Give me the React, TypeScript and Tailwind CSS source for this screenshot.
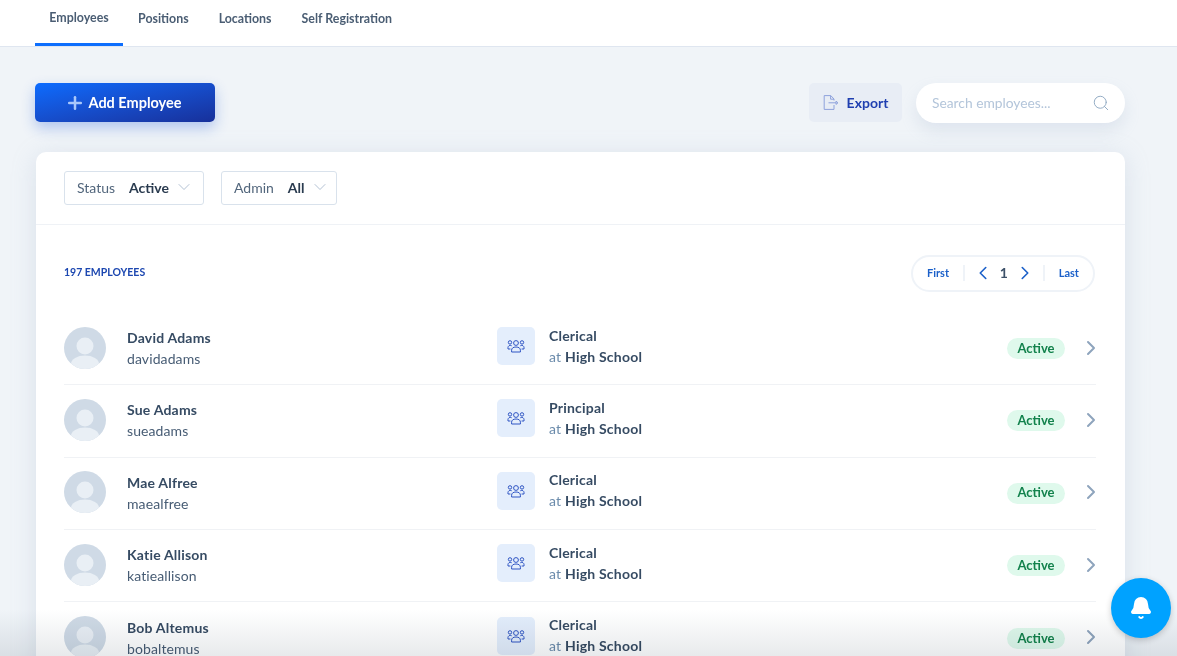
import * as React from "react"
import { ChevronDown, ChevronLeft, ChevronRight, Search, Plus, Bell } from "lucide-react"

const employees = [
  { name: "David Adams", user: "davidadams", role: "Clerical" },
  { name: "Sue Adams", user: "sueadams", role: "Principal" },
  { name: "Mae Alfree", user: "maealfree", role: "Clerical" },
  { name: "Katie Allison", user: "katieallison", role: "Clerical" },
  { name: "Bob Altemus", user: "bobaltemus", role: "Clerical" },
]

const tabs = ["Positions", "Locations", "Self Registration"]

const Avatar = () => (
  <svg width="42" height="42" viewBox="0 0 42 42" className="mb-[2px] shrink-0">
    <defs>
      <clipPath id="avatar-clip">
        <circle cx="21" cy="21" r="21" />
      </clipPath>
    </defs>
    <g clipPath="url(#avatar-clip)">
      <rect width="42" height="42" fill="#cfdae6" />
      <circle cx="21" cy="19" r="8.5" fill="#e9eff5" />
      <ellipse cx="21" cy="37" rx="14" ry="8.5" fill="#e9eff5" />
    </g>
  </svg>
)

const GroupIcon = () => (
  <svg width="18" height="14" viewBox="0 0 18 14" fill="none" stroke="#2f55c4" strokeWidth="1">
    <circle cx="9" cy="4" r="2.4" />
    <circle cx="3" cy="3.4" r="1.7" />
    <circle cx="15" cy="3.4" r="1.7" />
    <path d="M4.6 13v-1.8c0-2 1.6-3.2 4.4-3.2s4.4 1.2 4.4 3.2V13z" />
    <path d="M3.4 10H1c-.3-2 .4-3.6 2.2-3.6.6 0 1.1.1 1.5.4" />
    <path d="M14.6 10H17c.3-2-.4-3.6-2.2-3.6-.6 0-1.1.1-1.5.4" />
  </svg>
)

const ExportIcon = () => (
  <svg width="16" height="15" viewBox="0 0 16 15" fill="none" stroke="#8ea2dc" strokeWidth="1">
    <path d="M11 5.5V4L7.8.6H1.2v13.8H11V10" />
    <path d="M7.6.8v3.4H11" />
    <path d="M5.5 7.8h7.5" />
    <path d="M13 6.2l2 1.6-2 1.6z" />
  </svg>
)

const FilterSelect = ({ label, value, className }: { label: string; value: string; className: string }) => (
  <div className={`flex h-[34px] items-center rounded-[3px] border border-[#d9e2ec] pl-[12px] text-[14px] ${className}`}>
    <span className="text-[#52667c]">{label}</span>
    <span className="ml-[14px] font-bold text-[#2a3b4f]">{value}</span>
    <ChevronDown size={20} strokeWidth={1} className="mb-[2px] ml-[5px] text-[#a3b5ca]" />
  </div>
)

const EmployeeRow = ({ name, user, role, last }: { name: string; user: string; role: string; last: boolean }) => (
  <div className={`flex h-[72.3px] items-center ${last ? "" : "border-b border-[#f0f2f5]"}`}>
    <div className="flex w-[433px] items-center gap-[21px]">
      <Avatar />
      <div>
        <div className="text-[14px] leading-[20px] font-bold tracking-[0.2px] text-[#364b63]">{name}</div>
        <div className="mt-[1px] text-[14px] leading-[20px] tracking-[0.1px] text-[#475c74]">{user}</div>
      </div>
    </div>
    <div className="flex flex-1 items-center gap-[14px] pb-[5px]">
      <div className="flex h-[38px] w-[38px] items-center justify-center rounded-[5px] bg-[#e4eefc]">
        <GroupIcon />
      </div>
      <div>
        <div className="text-[14px] leading-[20px] font-bold tracking-[0.2px] text-[#364b63]">{role}</div>
        <div className="mt-[1px] text-[14px] leading-[20px] tracking-[0.2px] text-[#6b8bab]">
          at <span className="font-bold text-[#364b63]">High School</span>
        </div>
      </div>
    </div>
    <div className="flex h-[21px] w-[58px] items-center justify-center rounded-full bg-[#dff9ec] text-[13px] font-bold text-[#12824c]">
      Active
    </div>
    <ChevronRight size={24} strokeWidth={2} className="mr-[-7px] mb-[2px] ml-[14px] text-[#8ea4bd]" />
  </div>
)

export default function App() {
  return (
    <div className="relative h-[656px] overflow-hidden bg-[#f0f4f8] font-['Lato',sans-serif]">
      <nav className="flex h-[47px] items-start border-b border-[#dfe6f0] bg-white px-[35px]">
        <div className="h-[46px] w-[88px] border-b-[3px] border-[#0d6efd] pt-[9px] text-center text-[12.4px] leading-[18px] font-bold text-[#4a5d73]">
          Employees
        </div>
        {tabs.map((tab) => (
          <div key={tab} className="ml-[15px] pt-[10px] pr-[15px] text-[12.4px] leading-[18px] font-bold text-[#4a5d73]">
            {tab}
          </div>
        ))}
      </nav>

      <div className="px-[35px] pt-[36px] pr-[52px]">
        <div className="flex items-start">
          <button className="flex h-[39px] w-[180px] items-center justify-center gap-[3px] rounded-[5px] bg-gradient-to-br from-[#0b6cff] to-[#17309a] pr-[3px] text-[14.5px] font-bold text-white shadow-[0_6px_14px_rgba(30,90,220,0.3)]">
            <Plus size={20} strokeWidth={3} className="text-[#a9c8fb]" />
            Add Employee
          </button>
          <button className="ml-auto flex h-[39px] w-[93px] items-center justify-center gap-[8px] rounded-[5px] bg-[#e8edf5] pb-[1px] text-[14px] font-bold text-[#1f3fb0]">
            <ExportIcon />
            Export
          </button>
          <div className="ml-[14px] flex h-[40px] w-[209px] items-center justify-between rounded-full bg-white pr-[15px] pl-[16px] text-[13.8px] text-[#b3c5da] shadow-[0_8px_16px_rgba(150,170,200,0.2)]">
            <span>Search employees...</span>
            <Search size={18} strokeWidth={1.25} className="text-[#8ea7c1]" />
          </div>
        </div>

        <div className="mt-[29px] ml-px rounded-t-[10px] bg-white shadow-[0_4px_24px_rgba(150,170,200,0.25)]">
          <div className="flex h-[73px] items-center gap-[17px] border-b border-[#eff2f6] px-[28px] pb-[1px]">
            <FilterSelect label="Status" value="Active" className="w-[140px]" />
            <FilterSelect label="Admin" value="All" className="w-[116px]" />
          </div>
          <div className="pr-[29px] pl-[28px]">
            <div className="flex h-[88px] items-center justify-between pt-[8px]">
              <span className="text-[10.5px] font-bold text-[#1c47b0] uppercase">197 Employees</span>
              <div className="mr-px flex h-[37px] w-[184px] items-center justify-between rounded-full border-2 border-[#eff3f8] px-[14px] text-[11px] font-bold text-[#1b60c9]">
                <span>First</span>
                <span className="h-[16px] w-[2px] bg-[#eff3f8]" />
                <div className="mx-[-7px] flex items-center gap-[6px]">
                  <ChevronLeft size={22} strokeWidth={1.75} />
                  <span className="mb-[2px] text-[14px] text-[#3c5068]">1</span>
                  <ChevronRight size={22} strokeWidth={1.75} />
                </div>
                <span className="h-[16px] w-[2px] bg-[#eff3f8]" />
                <span>Last</span>
              </div>
            </div>
            {employees.map((e, i) => (
              <EmployeeRow key={e.user} name={e.name} user={e.user} role={e.role} last={i === employees.length - 1} />
            ))}
          </div>
        </div>
      </div>

      <div className="pointer-events-none absolute right-0 bottom-0 left-0 h-[46px] bg-gradient-to-b from-white to-[#e8eaec] mix-blend-multiply" />

      <div className="absolute top-[578px] left-[1111px] flex h-[60px] w-[60px] items-center justify-center rounded-full bg-[#00a2ff] shadow-[0_2px_6px_rgba(0,0,0,0.2)]">
        <Bell size={24} fill="white" className="text-white" />
      </div>
    </div>
  )
}
